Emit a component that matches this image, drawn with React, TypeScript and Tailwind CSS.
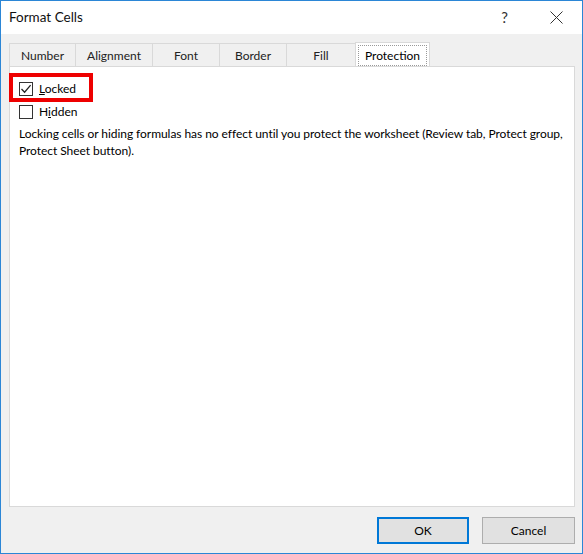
import { useState } from 'react';

const tabs = ['Number', 'Alignment', 'Font', 'Border', 'Fill', 'Protection'];
const tabWidths: Record<string, string> = {
  Number: 'w-[66px]',
  Alignment: 'w-[77px]',
  Font: 'w-[67px]',
  Border: 'w-[67px]',
  Fill: 'w-[69px]',
  Protection: 'w-[75px]',
};

function CheckBox({ checked }: { checked: boolean }) {
  return (
    <span className="flex h-[14px] w-[14px] shrink-0 items-center justify-center border border-[#333] bg-white">
      {checked && (
        <svg width="12" height="12" viewBox="0 0 12 12">
          <path d="M1.5 6 L4.6 9.2 L10.6 2.2" fill="none" stroke="#222" strokeWidth="1.3" />
        </svg>
      )}
    </span>
  );
}

export default function App() {
  const [active] = useState('Protection');

  return (
    <div
      className="flex h-[554px] w-[583px] flex-col border border-[#2b86d6] bg-[#f0f0f0] text-[12px] text-black"
      style={{ fontFamily: 'Lato, "Noto Sans", sans-serif' }}
    >
      {/* title bar */}
      <div className="flex h-[33px] shrink-0 items-center bg-white pl-[8px]">
        <span className="text-[13.5px] text-[#111]">Format Cells</span>
        <span className="ml-auto mr-[42px] text-[15px] text-[#333]">?</span>
        <svg className="mr-[19px]" width="13" height="13" viewBox="0 0 13 13">
          <path d="M0.5 0.5 L12.5 12.5 M12.5 0.5 L0.5 12.5" stroke="#333" strokeWidth="1" />
        </svg>
      </div>

      {/* body */}
      <div className="flex flex-1 flex-col pl-[8px] pr-[7px] pt-[8px]">
        <div className="flex h-[24px] items-end">
          {tabs.map((t) => {
            const sel = t === active;
            return (
              <div
                key={t}
                className={
                  sel
                    ? `relative -mb-px flex h-[25px] items-center justify-center border border-b-0 border-[#d9d9d9] bg-white px-[2px] pt-[1px] ${tabWidths[t]}`
                    : `flex h-[23px] items-center justify-center border border-b-0 border-r-0 border-[#d9d9d9] bg-[#f0f0f0] pt-[2px] text-[#222] ${tabWidths[t]}`
                }
              >
                {sel ? (
                  <span className="flex h-[21px] w-full items-center justify-center border border-dotted border-[#999]">{t}</span>
                ) : (
                  <span className="leading-[16px]">{t}</span>
                )}
              </div>
            );
          })}
        </div>

        <div className="relative h-[441px] border border-[#d9d9d9] bg-white pl-[9px] pt-[14px]">
          <div className="flex h-[16px] items-center gap-[6px]">
            <CheckBox checked />
            <span>
              <span className="underline">L</span>ocked
            </span>
          </div>
          <div className="mt-[7px] flex h-[16px] items-center gap-[6px]">
            <CheckBox checked={false} />
            <span>
              H<span className="underline">i</span>dden
            </span>
          </div>
          <p className="mt-[5px] whitespace-nowrap leading-[17px] tracking-[-0.05px]">
            Locking cells or hiding formulas has no effect until you protect the worksheet (Review tab, Protect group,
            <br />
            Protect Sheet button).
          </p>

          {/* annotation box */}
          <div className="absolute left-[-1px] top-[6px] h-[29px] w-[84px] border-[4px] border-[#ee0000]" />
        </div>

        <div className="flex flex-1 items-start justify-end gap-[13px] pt-[10px]">
          <button className="h-[27px] w-[92px] border-2 border-[#0078d7] bg-[#e1e1e1]">OK</button>
          <button className="h-[27px] w-[93px] border border-[#adadad] bg-[#e1e1e1]">Cancel</button>
        </div>
      </div>
    </div>
  );
}
